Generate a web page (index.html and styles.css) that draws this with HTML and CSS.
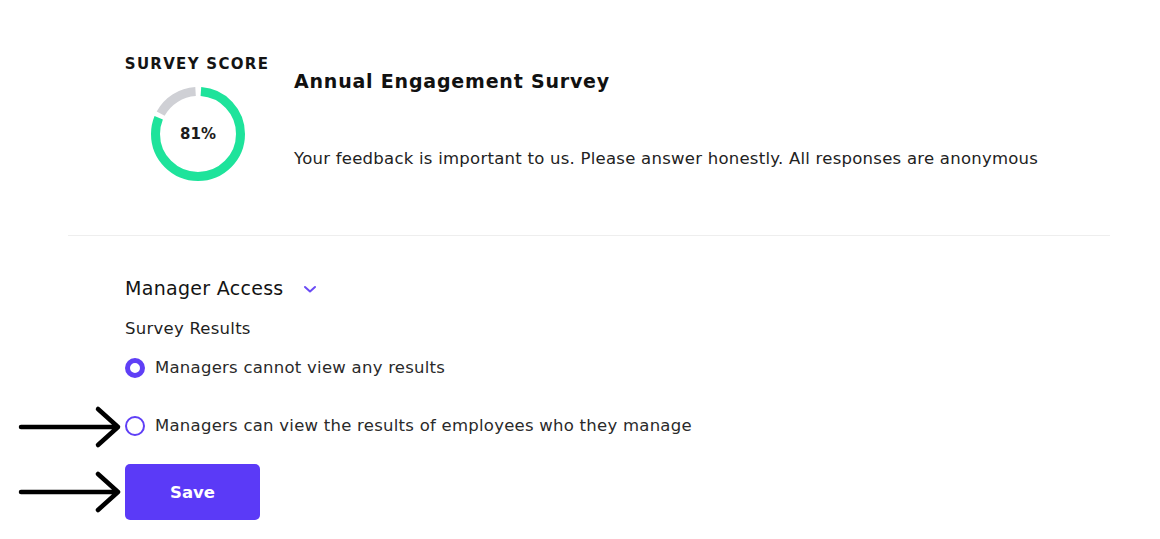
FILE: index.html
```html
<!DOCTYPE html>
<html lang="en">
<head>
<meta charset="utf-8">
<title>Annual Engagement Survey</title>
<link rel="stylesheet" href="styles.css">
</head>
<body>
<main class="page">
  <section class="top">
    <div class="score">
      <div class="score-label">SURVEY SCORE</div>
      <div class="donut">
        <svg width="96" height="96" viewBox="0 0 96 96">
          <g transform="rotate(-90 48 48)">
            <circle cx="48" cy="48" r="42.5" fill="none" stroke="#1ee39b" stroke-width="9" stroke-dasharray="213.6 300" stroke-dashoffset="-2.97"></circle>
            <circle cx="48" cy="48" r="42.5" fill="none" stroke="#cfd0d5" stroke-width="9" stroke-dasharray="43 300" stroke-dashoffset="-221.1"></circle>
          </g>
        </svg>
        <span class="donut-value">81%</span>
      </div>
    </div>
    <div class="intro">
      <h1 class="title">Annual Engagement Survey</h1>
      <p class="desc">Your feedback is important to us. Please answer honestly. All responses are anonymous</p>
    </div>
  </section>
  <hr class="divider">
  <section class="access">
    <div class="access-head">
      <h2 class="access-title">Manager Access</h2>
      <svg class="chevron" width="14" height="9" viewBox="0 0 14 9"><path d="M2 2 L7 6.5 L12 2" fill="none" stroke="#6a4bf5" stroke-width="2" stroke-linecap="round" stroke-linejoin="round"/></svg>
    </div>
    <div class="sub">Survey Results</div>
    <label class="option option-first"><span class="radio checked"></span><span>Managers cannot view any results</span></label>
    <label class="option option-second"><span class="radio"></span><span>Managers can view the results of employees who they manage</span></label>
    <button class="save" type="button">Save</button>
  </section>
  <svg class="arrow arrow-1" width="110" height="46" viewBox="0 0 110 46"><path d="M3 23 H100 M80 5 L100 23 L80 41" fill="none" stroke="#000" stroke-width="4.5" stroke-linecap="round" stroke-linejoin="round"/></svg>
  <svg class="arrow arrow-2" width="110" height="46" viewBox="0 0 110 46"><path d="M3 23 H100 M80 5 L100 23 L80 41" fill="none" stroke="#000" stroke-width="4.5" stroke-linecap="round" stroke-linejoin="round"/></svg>
</main>
</body>
</html>
```
FILE: styles.css
```css
* { box-sizing: border-box; }
html, body { margin: 0; padding: 0; background: #fff; }
body {
  font-family: "DejaVu Sans", "Noto Sans", sans-serif;
  color: #1c1c1c;
  width: 1160px;
  height: 539px;
  overflow: hidden;
}
.page { position: relative; height: 539px; }
.top {
  display: flex;
  padding: 54px 0 0 125px;
  height: 235px;
}
.score { width: 144px; display: flex; flex-direction: column; align-items: center; }
.score-label {
  font-size: 15px;
  font-weight: 700;
  letter-spacing: 1.3px;
  line-height: 20px;
  color: #141414;
  white-space: nowrap;
}
.donut { position: relative; width: 96px; height: 96px; margin-top: 12px; margin-left: 2px; }
.donut svg { display: block; }
.donut-value {
  position: absolute; inset: 0;
  display: flex; align-items: center; justify-content: center;
  font-size: 15px; font-weight: 700; color: #1c1c1c;
}
.intro { margin-left: 25px; padding-top: 14px; }
.title { margin: 0; font-size: 19px; font-weight: 700; letter-spacing: 0.8px; line-height: 26px; color: #111; }
.desc { margin: 55px 0 0; font-size: 16.5px; letter-spacing: 0.25px; line-height: 20px; color: #222; white-space: nowrap; }
.divider {
  margin: 0 50px 0 68px;
  border: 0;
  border-top: 1px solid #eeeeee;
  height: 0;
}
.access { padding: 40px 0 0 125px; }
.access-head { display: flex; align-items: center; height: 24px; }
.access-title { margin: 0; font-size: 19px; font-weight: 500; letter-spacing: 0.3px; line-height: 24px; color: #141414; }
.chevron { margin-left: 19px; margin-top: 2px; }
.sub { margin-top: 19px; font-size: 16.5px; letter-spacing: 0.25px; line-height: 20px; color: #1e1e1e; }
.option { display: flex; align-items: center; gap: 10px; font-size: 16.5px; letter-spacing: 0.25px; line-height: 20px; color: #2a2a2a; }
.option-first { margin-top: 19px; }
.option-second { margin-top: 38px; }
.radio {
  width: 20px; height: 20px; border-radius: 50%;
  border: 2px solid #5f3ff6;
  flex: none;
}
.radio.checked { border-width: 5.5px; }
.save {
  display: flex; align-items: center; justify-content: center;
  margin-top: 28px;
  width: 135px; height: 56px;
  border: 0; border-radius: 5px;
  background: #5b3af7;
  color: #fff;
  font-family: inherit;
  font-size: 16.5px; font-weight: 700;
}
.arrow { position: absolute; left: 18px; }
.arrow-1 { top: 404px; }
.arrow-2 { top: 469px; }
```
